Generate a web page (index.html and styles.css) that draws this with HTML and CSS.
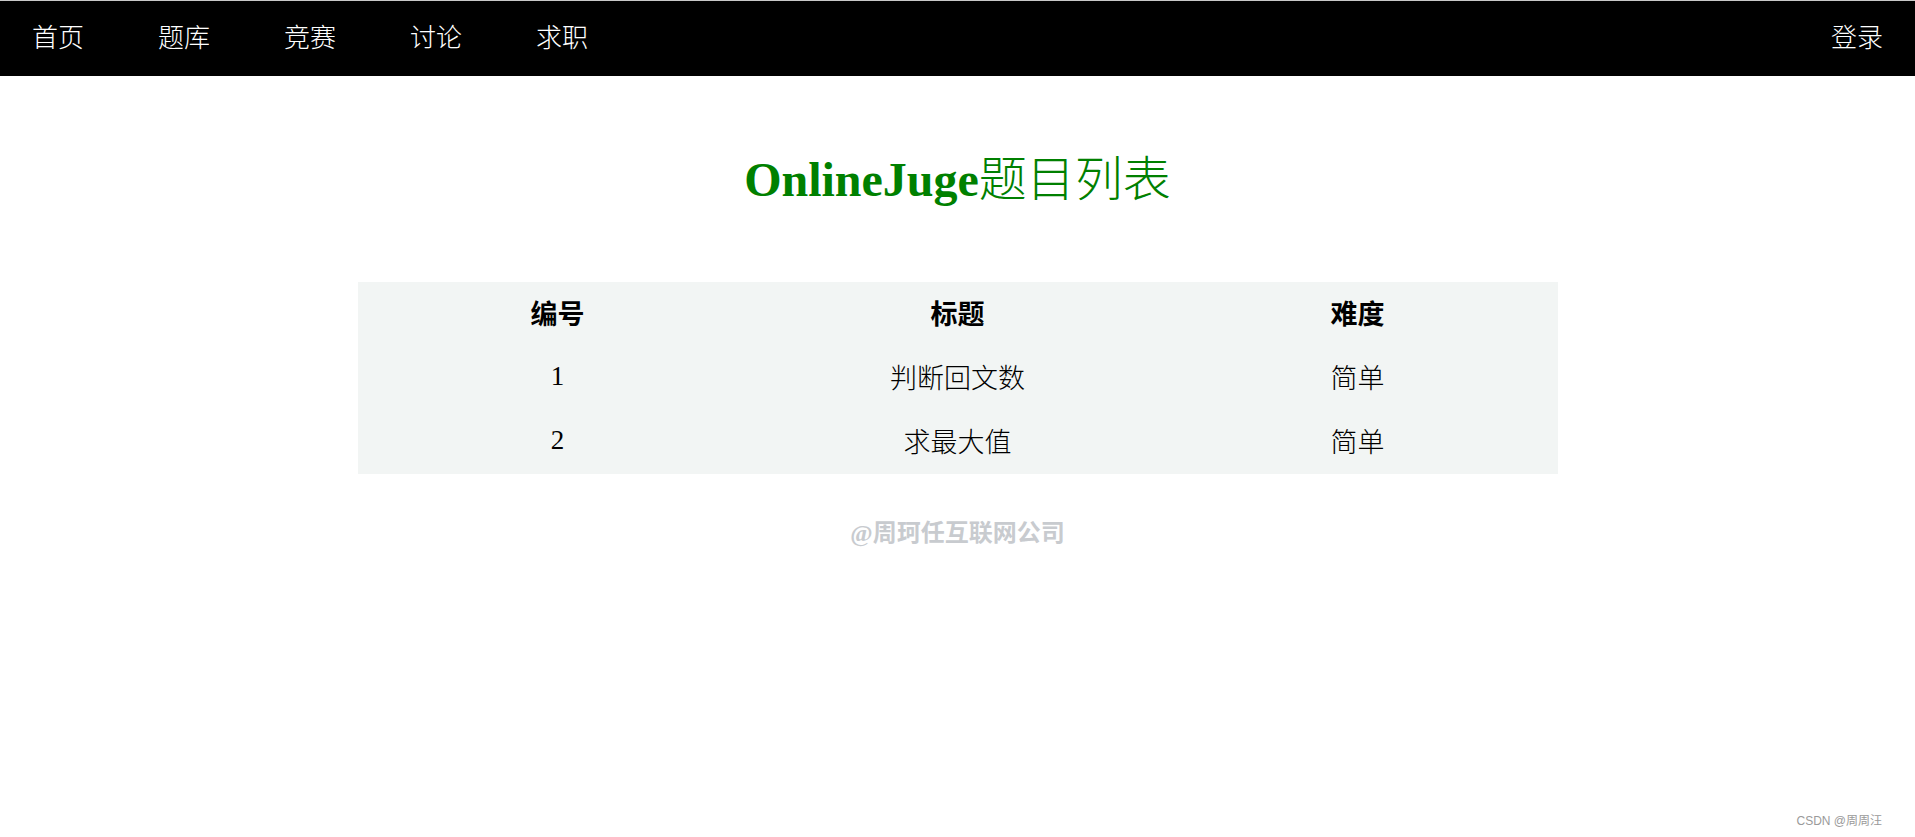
FILE: index.html
```html
<!DOCTYPE html>
<html lang="zh-CN">
<head>
<meta charset="utf-8">
<title>OnlineJuge题目列表</title>
<link rel="stylesheet" href="styles.css">
</head>
<body>
<div class="page">
  <nav class="navbar">
    <div class="nav-left">
      <a class="nav-link" href="#">首页</a>
      <a class="nav-link" href="#">题库</a>
      <a class="nav-link" href="#">竞赛</a>
      <a class="nav-link" href="#">讨论</a>
      <a class="nav-link" href="#">求职</a>
    </div>
    <a class="nav-link" href="#">登录</a>
  </nav>
  <main class="content">
    <h1 class="title">OnlineJuge<span class="title-cjk">题目列表</span></h1>
    <table class="question-list">
      <tr class="head-row">
        <th>编号</th>
        <th>标题</th>
        <th>难度</th>
      </tr>
      <tr>
        <td>1</td>
        <td>判断回文数</td>
        <td>简单</td>
      </tr>
      <tr>
        <td>2</td>
        <td>求最大值</td>
        <td>简单</td>
      </tr>
    </table>
    <div class="footer">@周珂任互联网公司</div>
  </main>
  <div class="watermark">CSDN @周周汪</div>
</div>
</body>
</html>
```
FILE: styles.css
```css
html, body {
  margin: 0;
  padding: 0;
  background: #ffffff;
}

body {
  font-family: "Liberation Serif", "Noto Sans CJK SC", serif;
  border-top: 1px solid #c8c8c8;
}

.page {
  position: relative;
  height: 836px;
}

.navbar {
  display: flex;
  justify-content: space-between;
  align-items: center;
  height: 75px;
  background: #000000;
  padding: 0 32px 0 32px;
}

.nav-left {
  display: flex;
  gap: 74px;
}

.nav-link {
  color: #ffffff;
  text-decoration: none;
  font-size: 26px;
  font-weight: 300;
  line-height: 30px;
}

.content {
  display: flex;
  flex-direction: column;
  align-items: center;
}

.title {
  margin: 74px 0 0;
  height: 60px;
  line-height: 60px;
  font-size: 48px;
  font-weight: bold;
  color: #008000;
}

.title-cjk {
  font-weight: 300;
}

.question-list {
  margin-top: 72px;
  width: 1200px;
  border-collapse: collapse;
  border-spacing: 0;
  background: #f2f5f4;
  table-layout: fixed;
}

.question-list th,
.question-list td {
  height: 61px;
  padding: 0 0 3px;
  text-align: center;
  vertical-align: middle;
  font-size: 27px;
  color: #000000;
}

.question-list th {
  font-weight: bold;
}

.question-list td {
  font-weight: 300;
}

.footer {
  margin-top: 44px;
  line-height: 30px;
  font-size: 24px;
  font-weight: 600;
  color: #c8cbcf;
}

.watermark {
  position: absolute;
  right: 33px;
  bottom: 9px;
  font-family: "Liberation Sans", "Noto Sans CJK SC", sans-serif;
  font-size: 12px;
  color: #9a9a9a;
}
```
